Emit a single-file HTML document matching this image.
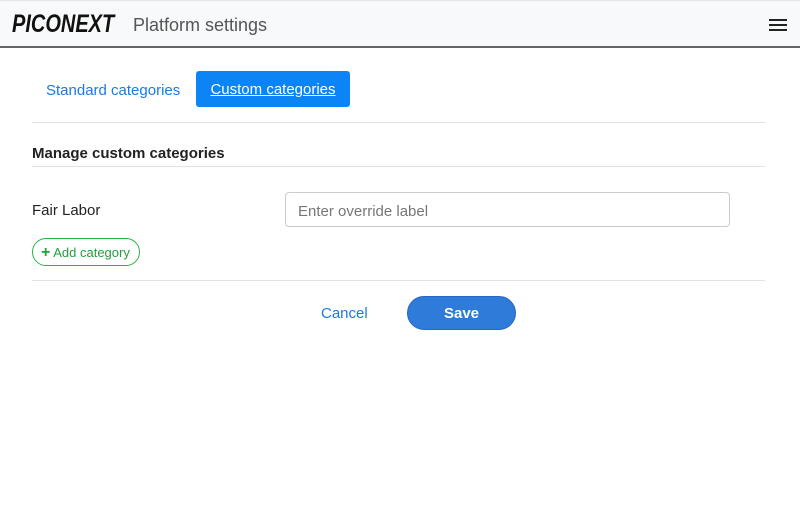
<!DOCTYPE html>
<html><head><style>
*{box-sizing:border-box;margin:0;padding:0}
body{width:800px;height:519px;background:#fff;font-family:"Liberation Sans",sans-serif;position:relative;overflow:hidden}
.hdr{position:absolute;left:0;top:0;width:800px;height:48px;background:#f8f9fa;border-top:1px solid #e5e5e5;border-bottom:2px solid #666}
.logo{position:absolute;left:12px;top:9px;font-size:25px;font-weight:bold;font-style:italic;letter-spacing:0px;color:#111;transform:scaleX(0.8);transform-origin:left}
.title{position:absolute;left:133px;top:14px;font-size:18px;color:#555}
.burger{position:absolute;left:769px;top:18px;width:18px}
.burger div{height:2px;background:#222;margin-bottom:3px}
.abs{position:absolute}
</style></head><body>
<div class="hdr">
<div class="logo">PICONEXT</div>
<div class="title">Platform settings</div>
<div class="burger"><div></div><div></div><div></div></div>
</div>
<div class="abs" style="left:46px;top:82px;font-size:15px;color:#1a7ae6">Standard categories</div>
<div class="abs" style="left:196px;top:71px;width:154px;height:36px;background:#0d84f5;border-radius:3px;color:#fff;font-size:15px;text-align:center;line-height:38px;"><span style="text-decoration:underline">Custom categories</span></div>
<div class="abs" style="left:32px;top:122px;width:733px;height:1px;background:#e2e2e2"></div>
<div class="abs" style="left:32px;top:145px;font-size:15px;font-weight:bold;color:#222">Manage custom categories</div>
<div class="abs" style="left:32px;top:166px;width:733px;height:1px;background:#e2e2e2"></div>
<div class="abs" style="left:32px;top:202px;font-size:15px;color:#222">Fair Labor</div>
<div class="abs" style="left:285px;top:192px;width:445px;height:35px;border:1px solid #ccc;border-radius:4px;font-size:15px;color:#777;padding:10px 12px 0">Enter override label</div>
<div class="abs" style="left:32px;top:238px;width:108px;height:28px;border:1px solid #2bb34a;border-radius:14px;color:#22a03c;font-size:13px;line-height:28px;padding-left:8px"><b style="font-size:16px">+</b> Add category</div>
<div class="abs" style="left:32px;top:280px;width:733px;height:1px;background:#e2e2e2"></div>
<div class="abs" style="left:321px;top:305px;font-size:15px;color:#1a7ae6">Cancel</div>
<div class="abs" style="left:407px;top:296px;width:109px;height:34px;background:#2f7bd9;border:1px solid #2668c0;border-radius:17px;color:#fff;font-size:15px;font-weight:bold;text-align:center;line-height:34px">Save</div>
</body></html>
